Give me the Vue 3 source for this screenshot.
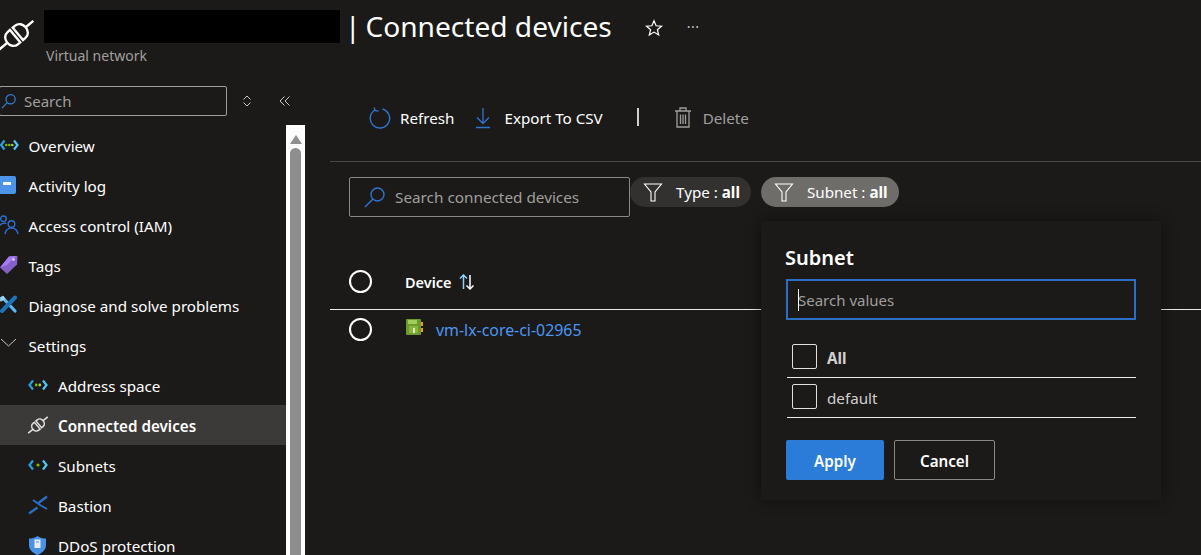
<script setup>
const filters = [
  { label: 'All', strong: true },
  { label: 'default', strong: false },
]
</script>

<template>
  <div class="page">
    <header class="head">
      <svg class="plug-big" viewBox="0 0 36 36" fill="none" stroke="#fff" stroke-width="2.400">
        <g transform="translate(17.500 15) rotate(-40)">
          <path d="M1.800 -8 H5 C9.500 -8 12 -4 12 0 C12 4 9.500 8 5 8 H1.800 Z" />
          <path d="M-1.800 -8 H-5 C-9.500 -8 -12 -4 -12 0 C-12 4 -9.500 8 -5 8 H-1.800 Z" />
          <path d="M12 0 H22 M-12 0 H-23" />
        </g>
      </svg>
      <div class="head-names">
        <div class="redacted"></div>
        <div class="kind">Virtual network</div>
      </div>
      <h1 class="title"><span class="title-bar">|</span>Connected devices</h1>
      <svg class="star" viewBox="0 0 18 18" fill="none" stroke="#fff" stroke-width="1.200">
        <path d="M9 1.800 L11.100 6.800 L16.500 7.200 L12.400 10.700 L13.700 16 L9 13.100 L4.300 16 L5.600 10.700 L1.500 7.200 L6.900 6.800 Z" />
      </svg>
      <span class="dots">···</span>
    </header>

    <div class="body">
      <aside class="side">
        <div class="side-tools">
          <div class="side-search">
            <svg class="lens" viewBox="0 0 18 18" fill="none" stroke="#2f7fd6" stroke-width="1.400">
              <circle cx="10.800" cy="7" r="5.200" />
              <path d="M7 10.800 L1 17" />
            </svg>
            <span>Search</span>
          </div>
          <svg class="updown" viewBox="0 0 10 14" fill="none" stroke="#c8c6c4" stroke-width="1">
            <path d="M1.500 5.500 L5 2 L8.500 5.500 M1.500 8.500 L5 12 L8.500 8.500" />
          </svg>
          <svg class="collapse" viewBox="0 0 12 12" fill="none" stroke="#c8c6c4" stroke-width="1">
            <path d="M5.500 1.500 L1 6 L5.500 10.500 M10.500 1.500 L6 6 L10.500 10.500" />
          </svg>
        </div>
        <div class="nav-wrap">
          <nav class="nav">
            <a class="row">
              <svg class="ico" viewBox="0 0 20 20" fill="none" stroke-width="2.200">
                <path d="M4.500 5.500 L1 10 L4.500 14.500" stroke="#2aa0dc" />
                <path d="M14 5.500 L17.500 10 L14 14.500" stroke="#50c7f5" />
                <circle cx="6.300" cy="10" r="1.300" fill="#7fba00" stroke="none" />
                <circle cx="9.300" cy="10" r="1.300" fill="#7fba00" stroke="none" />
                <circle cx="12.300" cy="10" r="1.300" fill="#a5d34a" stroke="none" />
              </svg>
              Overview
            </a>
            <a class="row">
              <svg class="ico" viewBox="0 0 20 20">
                <rect x="-2" y="1" width="18" height="18" rx="2" fill="#4b94e8" />
                <rect x="3" y="7" width="8" height="3" fill="#f2f6fb" />
              </svg>
              Activity log
            </a>
            <a class="row">
              <svg class="ico" viewBox="0 0 20 20" fill="none" stroke="#2f6fd0" stroke-width="1.400">
                <circle cx="3.500" cy="3.800" r="2.800" />
                <path d="M-1 12 C0 8.500 4 7.500 6.500 8.500" />
                <circle cx="11.500" cy="9" r="3.300" />
                <path d="M5 19 C6 14 9 13 11.500 13 C14 13 17 14 18 19" />
              </svg>
              Access control (IAM)
            </a>
            <a class="row">
              <svg class="ico" viewBox="0 0 20 20">
                <path d="M9 1.500 L16.500 1 C17.300 1 17.500 1.500 17.500 2 L17 9.500 L7 19 L0 12.500 Z" fill="#8661c5" />
                <path d="M9 1.500 L16.500 1 L7 10 L0 12.500 Z" fill="#a67af4" />
                <circle cx="13.500" cy="4.500" r="1.300" fill="#e6d8fb" />
              </svg>
              Tags
            </a>
            <a class="row">
              <svg class="ico" viewBox="0 0 20 20" fill="none" stroke-linecap="round">
                <path d="M3 3 L15 16" stroke="#5cb8f0" stroke-width="3.200" />
                <path d="M15 2.500 L2 16" stroke="#1d74b8" stroke-width="4" />
                <path d="M0 3 L3 1 L5 4 L1 6 Z" fill="#9fd4f5" stroke="#9fd4f5" />
              </svg>
              Diagnose and solve problems
            </a>
            <a class="row">
              <svg class="ico" viewBox="0 0 20 20" fill="none" stroke="#c8c6c4" stroke-width="1">
                <path d="M1 4 L8.500 11 L16 4" />
              </svg>
              Settings
            </a>
            <a class="row sub">
              <svg class="ico" viewBox="0 0 20 20" fill="none" stroke-width="2.200">
                <path d="M5 5.500 L1.500 10 L5 14.500" stroke="#2aa0dc" />
                <path d="M15 5.500 L18.500 10 L15 14.500" stroke="#50c7f5" />
                <circle cx="8.200" cy="10" r="1.400" fill="#7fba00" stroke="none" />
                <circle cx="11.800" cy="10" r="1.400" fill="#a5d34a" stroke="none" />
              </svg>
              Address space
            </a>
            <a class="row sub active">
              <svg class="ico" viewBox="0 0 36 36" fill="none" stroke="#e1dfdd" stroke-width="2.800">
                <g transform="translate(18 18) rotate(-40)">
                  <path d="M1.800 -8 H5 C9.500 -8 12 -4 12 0 C12 4 9.500 8 5 8 H1.800 Z" />
                  <path d="M-1.800 -8 H-5 C-9.500 -8 -12 -4 -12 0 C-12 4 -9.500 8 -5 8 H-1.800 Z" />
                  <path d="M12 0 H23 M-12 0 H-23" />
                </g>
              </svg>
              Connected devices
            </a>
            <a class="row sub">
              <svg class="ico" viewBox="0 0 20 20" fill="none" stroke-width="2.200">
                <path d="M5 5.500 L1.500 10 L5 14.500" stroke="#2aa0dc" />
                <path d="M15 5.500 L18.500 10 L15 14.500" stroke="#50c7f5" />
                <circle cx="10" cy="10" r="1.600" fill="#7fba00" stroke="none" />
              </svg>
              Subnets
            </a>
            <a class="row sub">
              <svg class="ico" viewBox="0 0 20 20" fill="none" stroke="#2a6fc4" stroke-width="2.400">
                <path d="M1 18.500 L9.500 12.500" />
                <path d="M10.500 8 L19 1.500" />
                <path d="M5 5 L12 10 L19 14" stroke-width="2" />
              </svg>
              Bastion
            </a>
            <a class="row sub">
              <svg class="ico" viewBox="0 0 20 20">
                <path d="M1 3.500 C4 3.500 7 3 9.500 1 C12 3 15 3.500 18 3.500 L18 10 C18 15 14 18 9.500 20 C5 18 1 15 1 10 Z" fill="#4a92e8" />
                <rect x="6.500" y="4.500" width="6" height="8.500" fill="#e8edf3" />
                <rect x="8" y="6.500" width="3" height="1" fill="#4a92e8" />
              </svg>
              DDoS protection
            </a>
          </nav>
          <div class="scroll">
            <span class="scroll-up"></span>
            <span class="scroll-thumb"></span>
          </div>
        </div>
      </aside>

      <main class="main">
        <div class="toolbar">
          <button class="tool">
            <svg class="tool-ico" viewBox="0 0 22 22" fill="none" stroke="#2f74cf" stroke-width="1.400">
              <path d="M13.500 2 A 9.700 9.700 0 1 1 6 3" />
              <path d="M5 0.500 L6.300 3.600 L9.500 4" />
            </svg>
            Refresh
          </button>
          <button class="tool">
            <svg class="tool-ico narrow" viewBox="0 0 16 22" fill="none" stroke="#2f74cf" stroke-width="1.300">
              <path d="M8 1 L8 16 M2 10.500 L8 16.500 L14 10.500 M1 20.500 L15 20.500" />
            </svg>
            Export To CSV
          </button>
          <span class="tool-sep"></span>
          <button class="tool muted">
            <svg class="tool-ico trash" viewBox="0 0 18 22" fill="none" stroke="#a19f9d" stroke-width="1.300">
              <path d="M1 4 L17 4 M6 3.500 L6 1 L12 1 L12 3.500 M3 4 L3 20 L15 20 L15 4 M6.500 7.500 L6.500 17 M9 7.500 L9 17 M11.500 7.500 L11.500 17" />
            </svg>
            Delete
          </button>
        </div>

        <div class="filters">
          <div class="dev-search">
            <svg class="lens wide" viewBox="0 0 22 22" fill="none" stroke="#2f74cf" stroke-width="1.400">
              <circle cx="13.500" cy="8.500" r="6.500" />
              <path d="M9 13 L1 21" />
            </svg>
            <span>Search connected devices</span>
          </div>
          <div class="pill">
            <svg class="funnel" viewBox="0 0 20 20" fill="none" stroke="#fff" stroke-width="1.100">
              <path d="M1.500 2 L18.500 2 L12 10 L12 19 L8 19 L8 10 Z" />
            </svg>
            <span>Type : <b>all</b></span>
          </div>
          <div class="pill open">
            <svg class="funnel" viewBox="0 0 20 20" fill="none" stroke="#fff" stroke-width="1.100">
              <path d="M1.500 2 L18.500 2 L12 10 L12 19 L8 19 L8 10 Z" />
            </svg>
            <span>Subnet : <b>all</b></span>
          </div>
        </div>

        <div class="table-head">
          <span class="radio"></span>
          <span class="col-title">Device</span>
          <svg class="sort" viewBox="0 0 16 16" fill="none" stroke-width="1.500">
            <path d="M4.500 15 L4.500 1 M1 4.500 L4.500 1 L8 4.500" stroke="#8fd0ff" />
            <path d="M11 1 L11 15 M7.500 11.500 L11 15 L14.500 11.500" stroke="#fff" />
          </svg>
        </div>
        <div class="table-row">
          <span class="radio"></span>
          <svg class="vm" viewBox="0 0 18 17">
            <rect x="0" y="0" width="15" height="16" rx="1" fill="#6c9a2d" />
            <rect x="2" y="1" width="9" height="4" fill="#a3cd5b" />
            <rect x="3" y="7" width="9" height="7" fill="#88b53d" />
            <rect x="7" y="9" width="2" height="5" fill="#dcecb8" />
            <rect x="15" y="3" width="2" height="4" fill="#e3a21a" />
            <rect x="15" y="9" width="2" height="4" fill="#e3a21a" />
          </svg>
          <a class="dev-link">vm-lx-core-ci-02965</a>
        </div>

        <section class="pop">
          <h2 class="pop-title">Subnet</h2>
          <div class="pop-input"><i class="caret"></i><span>Search values</span></div>
          <ul class="pop-list">
            <li v-for="f in filters" :key="f.label" class="pop-item">
              <span class="check"></span>
              <span class="pop-label" :class="{ strong: f.strong }">{{ f.label }}</span>
            </li>
          </ul>
          <div class="pop-actions">
            <button class="btn primary">Apply</button>
            <button class="btn">Cancel</button>
          </div>
        </section>
      </main>
    </div>
  </div>
</template>

<style>
html, body { margin: 0; background: #1b1a19; }
</style>

<style scoped>
.page {
  width: 1201px;
  height: 555px;
  overflow: hidden;
  background: #1b1a19;
  color: #fff;
  font-family: "Noto Sans", "Open Sans", sans-serif;
  font-size: 15.200px;
  display: flex;
  flex-direction: column;
}
button { font: inherit; color: inherit; background: none; border: 0; padding: 0; }

.head { height: 72px; flex: none; display: flex; align-items: flex-start; box-sizing: border-box; padding-top: 10px; }
.plug-big { width: 36px; height: 36px; margin: 10px 0 0 -1px; flex: none; overflow: visible; }
.head-names { width: 296px; margin-left: 9px; flex: none; }
.redacted { height: 33px; background: #000; }
.kind { margin: 2px 0 0 2px; font-size: 14px; line-height: 22px; color: #a19f9d; }
.title { margin: -3px 0 0 5px; font-size: 28.100px; line-height: 38px; font-weight: 400; white-space: nowrap; }
.title-bar { margin-right: 5px; }
.star { width: 18px; height: 18px; margin: 9px 0 0 33px; }
.dots { margin: 5px 0 0 24px; font-size: 14px; color: #c8c6c4; line-height: 24px; letter-spacing: 0.5px; }

.body { flex: 1; display: flex; min-height: 0; }
.side { width: 305px; flex: none; display: flex; flex-direction: column; }
.side-tools { height: 53px; flex: none; display: flex; align-items: flex-start; padding-top: 14px; box-sizing: border-box; }
.side-search {
  width: 228px; height: 30px; box-sizing: border-box; margin-left: -1px;
  border: 1px solid #a19f9d; border-radius: 2px;
  display: flex; align-items: center; gap: 7px; padding-left: 1px;
  color: #a19f9d; font-size: 15px;
}
.lens { width: 16px; height: 16px; flex: none; }
.lens.wide { width: 22px; height: 22px; }
.updown { width: 10px; height: 14px; margin: 8px 0 0 15px; }
.collapse { width: 12px; height: 12px; margin: 9px 0 0 27px; }

.nav-wrap { flex: 1; display: flex; min-height: 0; }
.nav { width: 286px; flex: none; }
.row {
  height: 40px; display: flex; align-items: center; box-sizing: border-box;
  white-space: nowrap; padding: 1px 0 0 28.500px; position: relative;
}
.row.sub { padding-left: 58px; }
.row.active { background: #3b3a39; font-weight: 600; }
.ico { position: absolute; left: 0; top: 10px; width: 20px; height: 20px; overflow: visible; }
.row.sub .ico { left: 28px; }
.scroll { width: 19px; flex: none; background: #fff; display: flex; flex-direction: column; align-items: center; }
.scroll-up { width: 0; height: 0; margin-top: 10px; border: 6px solid transparent; border-top: 0; border-bottom: 9px solid #8e8e8e; }
.scroll-thumb { width: 11px; flex: 1; margin-top: 4px; border-radius: 6px 6px 0 0; background: #8e8e8e; }

.main { flex: 1; position: relative; padding-left: 25px; }
.toolbar { height: 90px; display: flex; align-items: flex-start; padding: 34px 0 0 39px; box-sizing: border-box; border-bottom: 1px solid #484644; }
.tool { display: flex; align-items: center; gap: 9px; height: 24px; white-space: nowrap; margin-right: 21px; }
.tool.muted { color: #a19f9d; }
.tool-ico { width: 22px; height: 22px; flex: none; }
.tool-ico.narrow { width: 16px; margin-right: 4px; }
.tool-ico.trash { width: 18px; margin-right: 2px; }
.tool-sep { width: 2px; height: 18px; background: #d2d0ce; margin: 2px 35px 0 13px; }

.filters { display: flex; align-items: flex-start; margin: 15px 0 0 19px; }
.dev-search {
  width: 281px; height: 40px; box-sizing: border-box;
  border: 1px solid #8a8886; border-radius: 2px;
  display: flex; align-items: center; gap: 9px; padding-left: 14px;
  color: #a19f9d; font-size: 15.300px;
}
.pill {
  height: 30px; padding: 0 11px 0 13px; border-radius: 15px; background: #323130;
  display: flex; align-items: center; gap: 13px; white-space: nowrap;
}
.pill.open { margin-left: 10px; background: #6f6d6a; }
.pill b { font-weight: 700; }
.funnel { width: 20px; height: 20px; flex: none; }

.table-head {
  margin: 45px 0 0 0; height: 48px; box-sizing: border-box; padding: 0 0 8px 19px;
  display: flex; align-items: center; border-bottom: 1px solid #edebe9;
}
.radio { width: 23px; height: 23px; box-sizing: border-box; border: 2px solid #fff; border-radius: 50%; flex: none; }
.col-title { margin-left: 33px; font-weight: 600; font-size: 14.500px; }
.sort { width: 16px; height: 16px; margin-left: 7px; }
.table-row { display: flex; align-items: center; height: 39px; padding-left: 19px; }
.vm { width: 18px; height: 17px; margin: -4px 0 0 34px; flex: none; }
.dev-link { margin-left: 12px; color: #4c96f2; font-size: 15.900px; }

.pop {
  position: absolute; left: 456px; top: 149px; width: 400px; height: 279px;
  background: #1b1a19; box-sizing: border-box; padding: 22px 25px 0;
  box-shadow: 0 0 14px rgba(0, 0, 0, 0.45);
}
.pop-title { margin: 0 0 0 -1px; font-size: 20px; line-height: 30px; font-weight: 600; }
.pop-input {
  width: 350px; height: 41px; margin-top: 6px; box-sizing: border-box;
  border: 2px solid #2a6fc4; display: flex; align-items: center; padding-left: 10px;
  color: #a19f9d; font-size: 15px; position: relative;
}
.caret { position: absolute; left: 10px; top: 8px; width: 1px; height: 22px; background: #fff; }
.pop-list { list-style: none; margin: 18px 0 0; padding: 0 0 0 1px; width: 349px; }
.pop-item {
  height: 40px; box-sizing: border-box; padding: 7px 0 0 5px;
  display: flex; gap: 10px; border-bottom: 1px solid #edebe9; color: #d2d0ce;
}
.pop-label { margin-top: 3px; }
.strong { font-weight: 700; }
.check { width: 25px; height: 25px; box-sizing: border-box; border: 1px solid #e1dfdd; border-radius: 2px; flex: none; margin-top: -1px; }
.pop-actions { display: flex; gap: 10px; margin-top: 22px; }
.btn {
  height: 40px; width: 101px; box-sizing: border-box; border: 1px solid #8a8886;
  border-radius: 2px; font-weight: 600; padding-top: 2px;
}
.btn.primary { width: 98px; background: #2b7cd9; border: 0; }
</style>
